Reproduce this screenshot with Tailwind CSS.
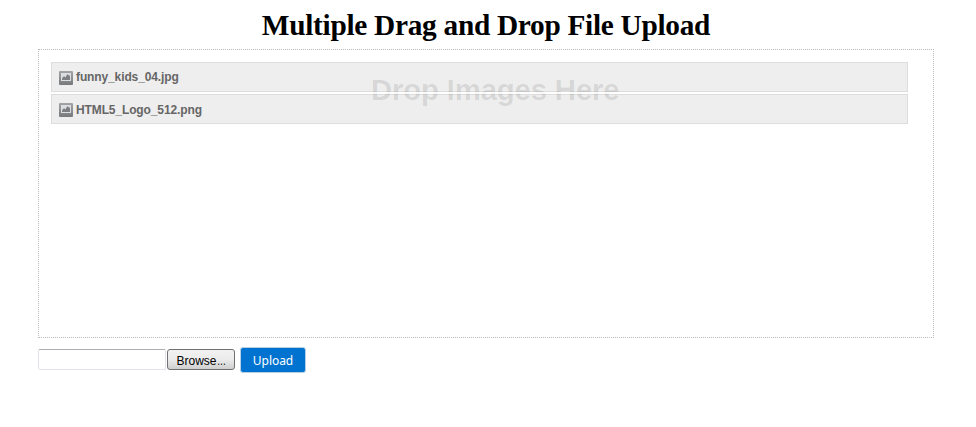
<!DOCTYPE html>
<html lang="en">
<head>
<meta charset="utf-8">
<title>Multiple Drag and Drop File Upload</title>
<script src="https://cdn.jsdelivr.net/npm/@tailwindcss/browser@4"></script>
</head>
<body class="bg-white">
<main class="ml-[38px] w-[896px] pt-2">
  <h1 class="h-[41px] pt-px text-center font-['Liberation_Serif',serif] text-[29.33px] leading-[33px] font-bold tracking-[-0.29px] whitespace-nowrap text-black">Multiple Drag and Drop File Upload</h1>
  <section class="relative h-[289px] border border-dotted border-[#bdbdbd] p-3 font-['Liberation_Sans',sans-serif]">
    <ul class="flex w-[857px] flex-col gap-0.5 text-[12px] font-bold tracking-[-0.12px] text-[#666]">
      <li class="flex h-[30px] items-center border border-[#ddd] bg-[#eee] pl-[7px]">
        <svg class="mt-0.5 mr-[3px] h-[14px] w-[14px]" viewBox="0 0 14 14"><defs><linearGradient id="g" x2="0" y2="1"><stop stop-color="#a2a5a6"/><stop offset="1" stop-color="#77797a"/></linearGradient></defs><rect width="14" height="14" rx="1" fill="url(#g)"/><path d="M2 2h10v8H2z" fill="#dcdedf"/><path d="M3 9V7.5L5 5l1.3 1.5L8.5 3l.8 1.5L10 3.5l1 2V9z" fill="#7d8082"/></svg>
        <span>funny_kids_04.jpg</span>
      </li>
      <li class="flex h-[30px] items-center border border-[#ddd] bg-[#eee] pl-[7px]">
        <svg class="mt-0.5 mr-[3px] h-[14px] w-[14px]" viewBox="0 0 14 14"><rect width="14" height="14" rx="1" fill="url(#g)"/><path d="M2 2h10v8H2z" fill="#dcdedf"/><path d="M3 9V7.5L5 5l1.3 1.5L8.5 3l.8 1.5L10 3.5l1 2V9z" fill="#7d8082"/></svg>
        <span class="pt-0.5">HTML5_Logo_512.png</span>
      </li>
    </ul>
    <div class="pointer-events-none absolute top-[23px] left-[332px] text-[29.33px] leading-[34px] font-bold tracking-[-0.16px] whitespace-nowrap text-black/10">Drop Images Here</div>
    <div class="absolute top-[42px] left-3 h-0.5 w-[857px] bg-white/75"></div>
  </section>
  <form class="flex pt-[9px]">
    <div class="mt-[2px] h-[21px] w-[128px] rounded-[2px] border border-[#e2e3ea] border-t-[#abadb3] bg-white"></div>
    <button type="button" class="mt-[2px] ml-px h-[21px] w-[68px] rounded-[3px] border border-[#707070] bg-linear-to-b from-[#f2f2f2] from-0% via-[#ebebeb] via-50% to-[#cfcfcf] pt-[2px] font-['Liberation_Sans',sans-serif] text-[12px] leading-[19px] whitespace-nowrap text-black">Browse<span class="inline-block origin-left scale-x-75 -mr-[3px]">…</span></button>
    <button type="button" class="ml-[5px] h-[26px] w-[66px] rounded-[3px] border border-[#b8d0e5] bg-[#0073d1] pt-px font-['Noto_Sans',sans-serif] text-[12px] leading-[24px] tracking-[-0.05px] text-white">Upload</button>
  </form>
</main>
</body>
</html>
